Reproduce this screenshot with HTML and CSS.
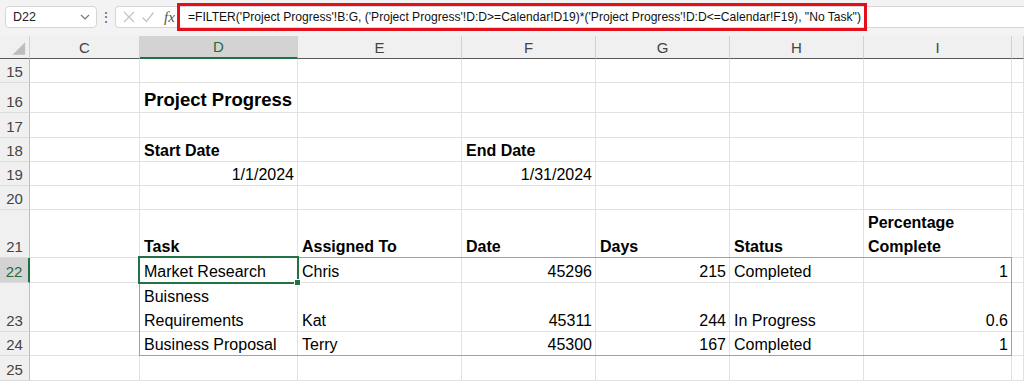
FILE: index.html
```html
<!DOCTYPE html>
<html>
<head>
<meta charset="utf-8">
<link rel="stylesheet" href="styles.css">
</head>
<body>
<div class="topbar">
  <div class="namebox">
    <span class="namebox-text">D22</span>
    <svg class="chev" width="10" height="6" viewBox="0 0 10 6"><polyline points="1,1 5,5 9,1" fill="none" stroke="#777" stroke-width="1.2"/></svg>
  </div>
  <div class="dots">⋮</div>
  <div class="fbox">
    <svg class="ficon" width="14" height="14" viewBox="0 0 14 14"><path d="M2 2 L12 12 M12 2 L2 12" stroke="#c4c4c4" stroke-width="1.3" fill="none"/></svg>
    <svg class="ficon" width="14" height="14" viewBox="0 0 14 14"><path d="M1.5 7.5 L5.5 11.5 L12.5 2.5" stroke="#c4c4c4" stroke-width="1.3" fill="none"/></svg>
    <span class="fx">fx</span>
    <span class="formula">=FILTER('Project Progress'!B:G, ('Project Progress'!D:D&gt;=Calendar!D19)*('Project Progress'!D:D&lt;=Calendar!F19), "No Task")</span>
  </div>
  <div class="annot"></div>
</div>

<div class="sheet-wrap">
<div class="sheet">
  <!-- header row -->
  <div class="ch corner"><svg width="30" height="23" viewBox="0 0 30 23"><polygon points="26,6 26,19 13,19" fill="#bdbdbd"/></svg></div>
  <div class="ch">C</div>
  <div class="ch sel">D</div>
  <div class="ch">E</div>
  <div class="ch">F</div>
  <div class="ch">G</div>
  <div class="ch">H</div>
  <div class="ch">I</div>
  <div class="ch"></div>

  <!-- 15 -->
  <div class="rh">15</div><div class="c"></div><div class="c"></div><div class="c"></div><div class="c"></div><div class="c"></div><div class="c"></div><div class="c"></div><div class="c"></div>
  <!-- 16 -->
  <div class="rh">16</div><div class="c"></div><div class="c title"><span>Project Progress</span></div><div class="c"></div><div class="c"></div><div class="c"></div><div class="c"></div><div class="c"></div><div class="c"></div>
  <!-- 17 -->
  <div class="rh">17</div><div class="c"></div><div class="c"></div><div class="c"></div><div class="c"></div><div class="c"></div><div class="c"></div><div class="c"></div><div class="c"></div>
  <!-- 18 -->
  <div class="rh">18</div><div class="c"></div><div class="c b"><span>Start Date</span></div><div class="c"></div><div class="c b"><span>End Date</span></div><div class="c"></div><div class="c"></div><div class="c"></div><div class="c"></div>
  <!-- 19 -->
  <div class="rh">19</div><div class="c"></div><div class="c r"><span>1/1/2024</span></div><div class="c"></div><div class="c r"><span>1/31/2024</span></div><div class="c"></div><div class="c"></div><div class="c"></div><div class="c"></div>
  <!-- 20 -->
  <div class="rh">20</div><div class="c"></div><div class="c"></div><div class="c"></div><div class="c"></div><div class="c"></div><div class="c"></div><div class="c"></div><div class="c"></div>
  <!-- 21 -->
  <div class="rh">21</div><div class="c"></div><div class="c b"><span>Task</span></div><div class="c b"><span>Assigned To</span></div><div class="c b"><span>Date</span></div><div class="c b"><span>Days</span></div><div class="c b"><span>Status</span></div><div class="c b wrap"><span>Percentage Complete</span></div><div class="c"></div>
  <!-- 22 -->
  <div class="rh sel">22</div><div class="c"></div><div class="c"><span>Market Research</span></div><div class="c"><span>Chris</span></div><div class="c r"><span>45296</span></div><div class="c r"><span>215</span></div><div class="c"><span>Completed</span></div><div class="c r"><span>1</span></div><div class="c"></div>
  <!-- 23 -->
  <div class="rh">23</div><div class="c"></div><div class="c wrap"><span>Buisness Requirements</span></div><div class="c"><span>Kat</span></div><div class="c r"><span>45311</span></div><div class="c r"><span>244</span></div><div class="c"><span>In Progress</span></div><div class="c r"><span>0.6</span></div><div class="c"></div>
  <!-- 24 -->
  <div class="rh">24</div><div class="c"></div><div class="c"><span>Business Proposal</span></div><div class="c"><span>Terry</span></div><div class="c r"><span>45300</span></div><div class="c r"><span>167</span></div><div class="c"><span>Completed</span></div><div class="c r"><span>1</span></div><div class="c"></div>
  <!-- 25 -->
  <div class="rh">25</div><div class="c"></div><div class="c"></div><div class="c"></div><div class="c"></div><div class="c"></div><div class="c"></div><div class="c"></div><div class="c"></div>
</div>
<div class="sheet overlay">
  <div class="tablerange"></div>
  <div class="selection"></div>
</div>
</div>
</body>
</html>
```

FILE: styles.css
```css
html, body {
  margin: 0;
  padding: 0;
}
body {
  width: 1024px;
  height: 381px;
  overflow: hidden;
  background: #ffffff;
  font-family: "Liberation Sans", Arial, sans-serif;
  color: #000;
}

/* ---------- formula bar ---------- */
.topbar {
  position: relative;
  height: 36px;
  box-sizing: border-box;
  background: #f3f3f3;
  display: flex;
  align-items: flex-start;
  padding-top: 6px;
}
.namebox {
  margin-left: 5px;
  width: 92px;
  height: 22px;
  box-sizing: border-box;
  background: #fff;
  border: 1px solid #d6d6d6;
  border-radius: 4px;
  display: flex;
  align-items: center;
  justify-content: space-between;
  padding: 0 6px 0 7px;
}
.namebox-text {
  font-size: 12.5px;
  color: #222;
}
.dots {
  width: 18px;
  text-align: center;
  font-size: 14px;
  color: #666;
  line-height: 22px;
}
.fbox {
  flex: 1;
  height: 22px;
  box-sizing: border-box;
  background: #fff;
  border: 1px solid #d6d6d6;
  border-right: none;
  border-radius: 4px 0 0 4px;
  display: flex;
  align-items: center;
  padding-left: 6px;
  gap: 5px;
  white-space: nowrap;
  overflow: hidden;
}
.ficon {
  flex: none;
}
.fx {
  font-family: "Liberation Serif", serif;
  font-style: italic;
  font-size: 15px;
  color: #555;
  margin-left: 4px;
  width: 14px;
}
.formula {
  margin-left: 5px;
  font-size: 12.1px;
  color: #111;
}
.annot {
  position: absolute;
  left: 177px;
  top: 3px;
  width: 690px;
  height: 28px;
  box-sizing: border-box;
  border: 3px solid #e3101b;
}

/* ---------- sheet ---------- */
.sheet-wrap {
  display: grid;
}
.sheet {
  grid-area: 1 / 1;
  display: grid;
  grid-template-columns: 30px 110px 158px 164px 134px 134px 134px 148px 1fr;
  grid-template-rows: 23px 24px 30px 25px 24px 24px 24px 48px 25px 49px 24px 25px;
}
.overlay {
  pointer-events: none;
}
.ch {
  box-sizing: border-box;
  background: #f0f0f0;
  border-bottom: 1px solid #5a5a5a;
  border-right: 1px solid #d0d0d0;
  display: flex;
  align-items: center;
  justify-content: center;
  font-size: 15px;
  color: #444;
}
.ch.corner {
  align-items: stretch;
  justify-content: stretch;
}
.ch.sel {
  background: #d3d3d3;
  color: #1d6b41;
  border-bottom: 2px solid #1e7145;
}
.rh {
  box-sizing: border-box;
  background: #f0f0f0;
  border-right: 1px solid #bdbdbd;
  border-bottom: 1px solid #dcdcdc;
  display: flex;
  align-items: flex-end;
  justify-content: center;
  font-size: 15px;
  color: #444;
  padding-bottom: 0;
  line-height: 21px;
}
.rh.sel {
  background: #d3d3d3;
  color: #1d6b41;
  border-right: 2px solid #1e7145;
}
.c {
  box-sizing: border-box;
  border-right: 1px solid #e1e1e1;
  border-bottom: 1px solid #e1e1e1;
  display: flex;
  align-items: flex-end;
  padding: 0 3px 0 4px;
  font-size: 16px;
  line-height: 24px;
  white-space: nowrap;
  min-width: 0;
}
.c > span {
  margin-bottom: -2px;
}
.c.r {
  justify-content: flex-end;
}
.c.b {
  font-weight: bold;
}
.c.wrap {
  white-space: normal;
}
.c.title {
  font-weight: bold;
  font-size: 18.5px;
  line-height: 28px;
}

.tablerange {
  grid-area: 9 / 3 / 12 / 9;
  margin: -1px 0 0 -1px;
  border: 1px solid #86a4dc;
}
.selection {
  grid-area: 9 / 3 / 10 / 4;
  position: relative;
  margin: -2px -1px -1px -2px;
  border: 2px solid #217346;
}
.selection::after {
  content: "";
  position: absolute;
  right: -4px;
  bottom: -4px;
  width: 5px;
  height: 5px;
  background: #217346;
  border: 1px solid #fff;
}
```
